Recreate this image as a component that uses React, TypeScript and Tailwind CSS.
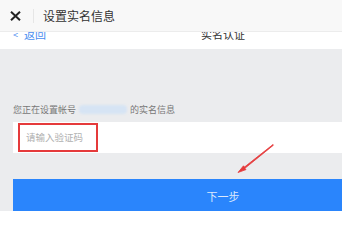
import React from "react";

export default function App() {
  return (
    <div className="relative w-[342px] h-[211px] overflow-hidden bg-[#ebecee] [font-family:'Noto_Sans_CJK_SC','Noto_Sans',sans-serif]">
      <div className="w-[446px]">
        <div className="h-[32px] flex items-center bg-[#f8f8f8] border-b border-[#ececec]">
          <svg width="11" height="10" viewBox="0 0 11 10" className="ml-[10px]">
            <path d="M1 0.8 L10 9.2 M10 0.8 L1 9.2" stroke="#222" strokeWidth="2" />
          </svg>
          <div className="ml-[12px] w-px h-[14px] bg-[#e6e6e6]" />
          <div className="ml-[9px] text-[12px] leading-none text-[#333]">设置实名信息</div>
        </div>
        <div className="h-[17px] bg-white overflow-hidden">
          <div className="-mt-[8px] h-[20px] grid grid-cols-[1fr_auto_1fr] items-center px-[13px]">
            <div className="flex items-center gap-[6px] text-[11px] leading-none text-[#4a8ef0]">
              <span className="text-[9px]">&lt;</span>
              <span>返回</span>
            </div>
            <div className="text-[11px] leading-none text-[#333]">实名认证</div>
            <div />
          </div>
        </div>
        <div className="px-[13px] pt-[54px]">
          <div className="flex items-center h-[12px] text-[9px] leading-none text-[#777]">
            <span>您正在设置帐号</span>
            <span className="mx-[3px] w-[48px] h-[9px] rounded-[4px] bg-[#d6e4f4] blur-[1px]" />
            <span>的实名信息</span>
          </div>
          <div className="mt-[7px] h-[31px] bg-white pt-[1px] pl-[5px]">
            <div className="w-[80px] h-[29px] border-2 border-[#e53a3b] flex items-center pl-[6px] text-[9.5px] leading-none text-[#b0b0b0]">
              请输入验证码
            </div>
          </div>
          <div className="mt-[26px] h-[40px] bg-[#2a85fc] flex justify-center pt-[12px] text-[11px] leading-none text-[#dce9fc]">
            下一步
          </div>
        </div>
      </div>
      <svg className="absolute left-0 top-0 pointer-events-none" width="342" height="211" viewBox="0 0 342 211">
        <path d="M273 144.5 L244.5 167 L243.5 165.8 L238 172.5 L246 169.6 L244.9 168.3 L273.4 145.2 Z" fill="#e53a3b" stroke="#e53a3b" strokeWidth="0.8" strokeLinejoin="round" />
      </svg>
    </div>
  );
}
